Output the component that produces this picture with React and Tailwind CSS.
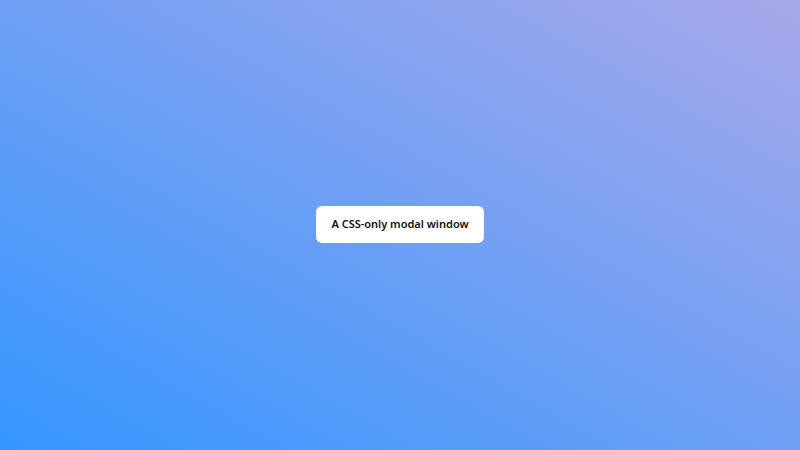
import React from 'react';

export default function App() {
  return (
    <div className="w-[800px] h-[450px] flex items-center justify-center bg-[linear-gradient(to_top_right,#3596ff,#a8a9ea)] font-['Noto_Sans',sans-serif]">
      <button className="w-[168px] h-[37px] -mt-[2px] rounded-[6px] bg-white text-[11px] font-semibold text-[#111] flex items-center justify-center">
        A CSS-only modal window
      </button>
    </div>
  );
}
